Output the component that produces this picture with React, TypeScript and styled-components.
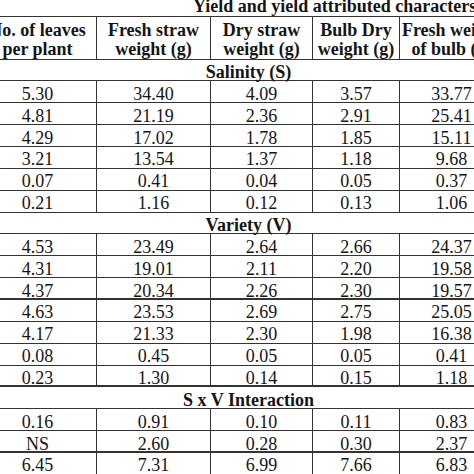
import React from "react";
import styled, { createGlobalStyle } from "styled-components";

const Global = createGlobalStyle`
  html, body { margin: 0; padding: 0; background: #fff; }
  #root { width: 474px; height: 474px; overflow: hidden; }
`;

const COLS = "118px 114px 102px 87px 104px 60px";

const Page = styled.div`
  width: 474px;
  height: 474px;
  overflow: hidden;
  background: #fff;
  font-family: "Liberation Serif", "Times New Roman", serif;
  color: #151515;
`;

const Table = styled.div`
  margin-left: -21px;
  width: 585px;
`;

const TitleRow = styled.div`
  height: 16px;
  padding-left: 214px;
  font-weight: bold;
  font-size: 18px;
  line-height: 12px;
  white-space: nowrap;
  overflow: visible;
`;

const Row = styled.div<{ $h: number; $thick?: boolean; $top?: boolean }>`
  display: grid;
  grid-template-columns: ${COLS};
  box-sizing: border-box;
  height: ${(p) => p.$h}px;
  border-bottom: ${(p) => (p.$thick ? "2px" : "1px")} solid #333;
  border-top: ${(p) => (p.$top ? "1px solid #333" : "none")};
`;

const HeadCell = styled.div`
  box-sizing: border-box;
  border-right: 1px solid #333;
  text-align: center;
  font-weight: bold;
  font-size: 18px;
  line-height: 19px;
  padding-top: 3.5px;
  white-space: nowrap;
`;

const Cell = styled.div`
  box-sizing: border-box;
  border-right: 1px solid #333;
  text-align: center;
  font-size: 18px;
  line-height: 18px;
  padding-top: 3.5px;
  white-space: nowrap;
`;

const SectionRow = styled.div<{ $thick?: boolean }>`
  box-sizing: border-box;
  height: 21.86px;
  border-bottom: ${(p) => (p.$thick ? "2px" : "1px")} solid #333;
  text-align: center;
  padding-right: 46px;
  font-weight: bold;
  font-size: 18px;
  line-height: 18px;
  padding-top: 3.5px;
  white-space: nowrap;
`;

type Section = { title: string; rows: string[][]; thick: number[] };

const headers: [string, string][] = [
  ["No. of leaves", "per plant"],
  ["Fresh straw", "weight (g)"],
  ["Dry straw", "weight (g)"],
  ["Bulb Dry", "weight (g)"],
  ["Fresh weight", "of bulb (g)"],
  ["", ""],
];

const sections: Section[] = [
  {
    title: "Salinity (S)",
    rows: [
      ["5.30", "34.40", "4.09", "3.57", "33.77"],
      ["4.81", "21.19", "2.36", "2.91", "25.41"],
      ["4.29", "17.02", "1.78", "1.85", "15.11"],
      ["3.21", "13.54", "1.37", "1.18", "9.68"],
      ["0.07", "0.41", "0.04", "0.05", "0.37"],
      ["0.21", "1.16", "0.12", "0.13", "1.06"],
    ],
    thick: [],
  },
  {
    title: "Variety (V)",
    rows: [
      ["4.53", "23.49", "2.64", "2.66", "24.37"],
      ["4.31", "19.01", "2.11", "2.20", "19.58"],
      ["4.37", "20.34", "2.26", "2.30", "19.57"],
      ["4.63", "23.53", "2.69", "2.75", "25.05"],
      ["4.17", "21.33", "2.30", "1.98", "16.38"],
      ["0.08", "0.45", "0.05", "0.05", "0.41"],
      ["0.23", "1.30", "0.14", "0.15", "1.18"],
    ],
    thick: [2, 6],
  },
  {
    title: "S x V Interaction",
    rows: [
      ["0.16", "0.91", "0.10", "0.11", "0.83"],
      ["NS", "2.60", "0.28", "0.30", "2.37"],
      ["6.45", "7.31", "6.99", "7.66", "6.83"],
    ],
    thick: [1],
  },
];

export default function App() {
  return (
    <Page>
      <Global />
      <Table>
        <TitleRow>Yield and yield attributed characters</TitleRow>
        <Row $h={43.5} $top>
          {headers.map(([a, b], i) => (
            <HeadCell key={i}>
              {a}
              <br />
              {b}
            </HeadCell>
          ))}
        </Row>
        {sections.map((s) => (
          <React.Fragment key={s.title}>
            <SectionRow>{s.title}</SectionRow>
            {s.rows.map((r, i) => (
              <Row key={i} $h={21.86} $thick={s.thick.includes(i)}>
                {r.map((v, j) => (
                  <Cell key={j}>{v}</Cell>
                ))}
                <Cell />
              </Row>
            ))}
          </React.Fragment>
        ))}
      </Table>
    </Page>
  );
}
